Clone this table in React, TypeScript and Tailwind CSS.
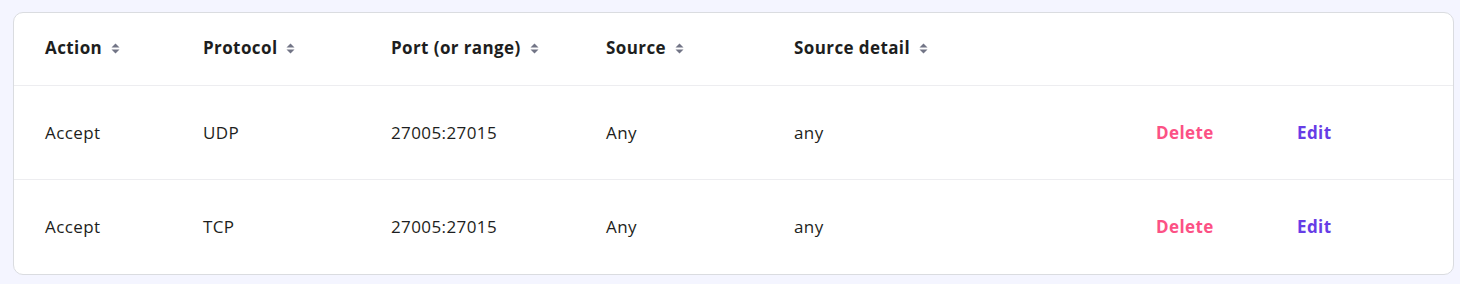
const headers = ['Action', 'Protocol', 'Port (or range)', 'Source', 'Source detail'];

const rules = [
  { action: 'Accept', protocol: 'UDP', port: '27005:27015', source: 'Any', detail: 'any' },
  { action: 'Accept', protocol: 'TCP', port: '27005:27015', source: 'Any', detail: 'any' },
];

const cols = 'grid grid-cols-[158px_188px_215px_188px_362px_141px_1fr] items-center pl-[31px]';

const SortIcon = () => (
  <svg width="9" height="11" viewBox="0 0 9 11" className="ml-[9px] shrink-0">
    <path d="M4.5 0.5 L8.5 4.5 H0.5 Z" fill="#727586" />
    <path d="M4.5 10.5 L8.5 6.5 H0.5 Z" fill="#727586" />
  </svg>
);

const App = () => {
  return (
    <main className="min-h-[284px] w-full bg-[#f4f5ff] pl-[13px] pr-[6px] pt-[12px] font-['Open_Sans',sans-serif] text-[17px] tracking-[0.4px] text-[#1d1e20]">
      <div className="overflow-hidden rounded-[10px] border border-[#dadce0] bg-white">
        <div className={`${cols} h-[73px] border-b border-[#ededf0] pb-[2px]`}>
          {headers.map((h) => (
            <div key={h} className="flex items-center font-bold">
              {h}
              <SortIcon />
            </div>
          ))}
          <div />
          <div />
        </div>
        {rules.map((r, i) => (
          <div
            key={r.protocol}
            className={`${cols} h-[94px] ${i < rules.length - 1 ? 'border-b border-[#ededf0]' : ''}`}
          >
            <span>{r.action}</span>
            <span>{r.protocol}</span>
            <span>{r.port}</span>
            <span>{r.source}</span>
            <span>{r.detail}</span>
            <button className="text-left font-bold tracking-[0.4px] text-[#fc5185]">Delete</button>
            <button className="text-left font-bold tracking-[0.4px] text-[#673de6]">Edit</button>
          </div>
        ))}
      </div>
    </main>
  );
};

export default App;
